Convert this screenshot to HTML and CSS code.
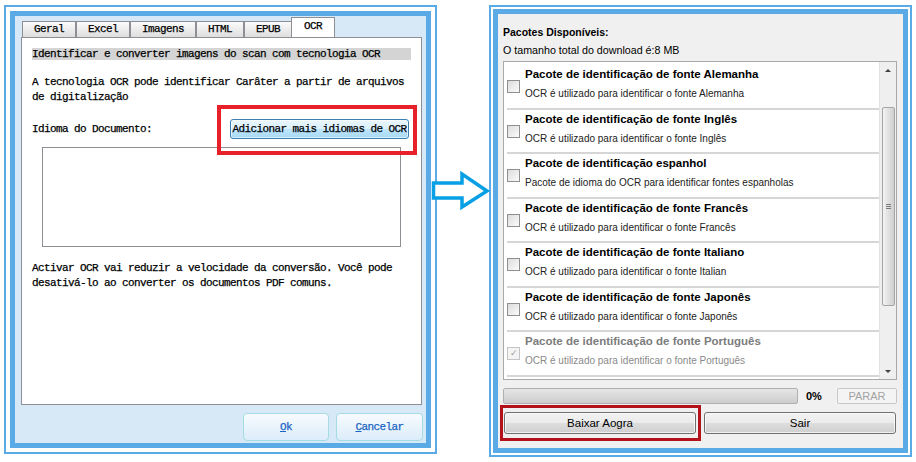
FILE: index.html
```html
<!DOCTYPE html>
<html>
	<head>
		<title>OCR</title>
		<link rel="stylesheet" href="styles.css">
	</head>
	<body>
		<div class="page">
			<!-- janela de configuração -->
			<div class="frame frame-left">
				<div class="dlg">
					<div class="tabs">
						<div class="tab">Geral</div>
						<div class="tab">Excel</div>
						<div class="tab">Imagens</div>
						<div class="tab">HTML</div>
						<div class="tab">EPUB</div>
						<div class="tab active">OCR</div>
					</div>
					<div class="pane">
						<div class="ocr-title">Identificar e converter imagens do scan com tecnologia OCR</div>
						<p class="intro">A tecnologia OCR pode identificar Carâter a partir de arquivos<br>de digitalização</p>
						<div class="lang-row">
							<span>Idioma do Documento:</span>
							<button class="btn-add">Adicionar mais idiomas de OCR</button>
						</div>
						<div class="lang-list"></div>
						<p class="note">Activar OCR vai reduzir a velocidade da conversão. Você pode<br>desativá-lo ao converter os documentos PDF comuns.</p>
						<div class="mark mark-add"></div>
					</div>
					<div class="footer">
						<button class="btn-dlg"><u>O</u>k</button>
						<button class="btn-dlg wide"><u>C</u>ancelar</button>
					</div>
				</div>
			</div>

			<svg class="arrow" width="62" height="42" viewBox="0 0 62 42">
				<polygon points="3.5,13 32,13 32,4 57,21 32,37 32,28 3.5,28" fill="#fff" stroke="#08a0e4" stroke-width="3.5" stroke-linejoin="miter"/>
			</svg>

			<!-- janela de download -->
			<div class="frame frame-right">
				<div class="dl">
					<div class="pkg-head">Pacotes Disponíveis:</div>
					<div class="pkg-size">O tamanho total do download é:8 MB</div>
					<div class="pkg-list">
						<div class="pkg-items" id="items"></div>
						<div class="scroll">
							<div class="sb-btn"><span class="tri up"></span></div>
							<div class="sb-track">
								<div class="sb-thumb"><span class="grip"></span></div>
							</div>
							<div class="sb-btn"><span class="tri down"></span></div>
						</div>
					</div>
					<div class="progress-row">
						<div class="progress"></div>
						<span class="pct">0%</span>
						<button class="btn-stop" disabled>PARAR</button>
					</div>
					<div class="actions">
						<button class="btn-win">Baixar Aogra</button>
						<button class="btn-win">Sair</button>
					</div>
					<div class="mark mark-dl"></div>
				</div>
			</div>
		</div>

		<script>
			// lista de pacotes de idioma
			const packs = [
				{ title: "Pacote de identificação de fonte Alemanha", desc: "OCR é utilizado para identificar o fonte Alemanha" },
				{ title: "Pacote de identificação de fonte Inglês", desc: "OCR é utilizado para identificar o fonte Inglês" },
				{ title: "Pacote de identificação espanhol", desc: "Pacote de idioma do OCR para identificar fontes espanholas" },
				{ title: "Pacote de identificação de fonte Francês", desc: "OCR é utilizado para identificar o fonte Francês" },
				{ title: "Pacote de identificação de fonte Italiano", desc: "OCR é utilizado para identificar o fonte Italian" },
				{ title: "Pacote de identificação de fonte Japonês", desc: "OCR é utilizado para identificar o fonte Japonês" },
				{ title: "Pacote de identificação de fonte Português", desc: "OCR é utilizado para identificar o fonte Português", installed: true },
			];

			const items = document.getElementById("items");
			packs.forEach((p) => {
				items.innerHTML += `
					<div class="pkg${p.installed ? " done" : ""}">
						<span class="chk">${p.installed ? "&#10003;" : ""}</span>
						<div class="pkg-text">
							<div class="pkg-title">${p.title}</div>
							<div class="pkg-desc">${p.desc}</div>
						</div>
					</div>
				`;
			});
		</script>
	</body>
</html>
```

FILE: styles.css
```css
body {
	margin: 0;
	background: #fff;
	font-family: "Liberation Sans", Arial, sans-serif;
}
.page {
	position: relative;
	display: flex;
	padding: 5px 0 0 4px;
}
.frame {
	box-sizing: border-box;
	border: 2px solid #5aaae6;
	background: #fff;
}
.frame-left {
	width: 433px;
	height: 449px;
	padding: 4px;
}
.frame-right {
	width: 423px;
	height: 452px;
	padding: 2px;
	margin-left: 52px;
}

/* janela esquerda */
.dlg {
	box-sizing: border-box;
	height: 100%;
	border: 5px solid #5aaae6;
	background: #d7e9f7;
	padding: 1px 3px 0 6px;
	font-family: "Liberation Mono", monospace;
	font-size: 11px;
	letter-spacing: -0.6px;
	color: #000;
	-webkit-text-stroke: 0.25px #000;
}
.tabs {
	display: flex;
	align-items: flex-end;
	height: 20px;
	margin-left: 1px;
}
.tab {
	box-sizing: border-box;
	height: 16px;
	line-height: 15px;
	padding: 0 11px;
	border: 1px solid #8d8f94;
	border-bottom: none;
	background: linear-gradient(#fbfbfb, #dedede);
}
.tab.active {
	position: relative;
	z-index: 1;
	height: 20px;
	line-height: 17px;
	padding: 0 12px;
	margin-left: -1px;
	background: #fff;
}
.pane {
	position: relative;
	box-sizing: border-box;
	height: 368px;
	margin-right: 1px;
	border: 1px solid #8d8f94;
	background: #fff;
	padding: 10px;
}
.ocr-title {
	height: 12px;
	line-height: 12px;
	background: #d4d4d4;
}
.intro,
.note {
	margin: 15px 0 0;
	line-height: 15px;
}
.note {
	margin-top: 14px;
}
.lang-row {
	display: flex;
	align-items: center;
	justify-content: space-between;
	margin-top: 14px;
	padding-right: 2px;
	height: 20px;
}
.btn-add {
	width: 179px;
	height: 20px;
	padding: 0;
	font: inherit;
	letter-spacing: inherit;
	color: #000;
	border: 1px solid #3c7fb1;
	border-radius: 3px;
	background: linear-gradient(#eaf6fd 0%, #d9f0fc 50%, #bee6fd 51%, #a7d9f5 100%);
	box-shadow: inset 0 0 0 1px rgba(255, 255, 255, 0.6);
}
.lang-list {
	box-sizing: border-box;
	width: 359px;
	height: 100px;
	margin: 8px 0 0 10px;
	border: 1px solid #8d8f94;
}
.footer {
	display: flex;
	justify-content: flex-end;
	gap: 7px;
	margin-top: 8px;
}
.btn-dlg {
	width: 86px;
	height: 28px;
	padding: 0;
	font: inherit;
	letter-spacing: inherit;
	color: #1a64c4;
	-webkit-text-stroke: 0.25px #1a64c4;
	border: 1px solid #a3dde3;
	border-radius: 4px;
	background: linear-gradient(#f7fbfe, #dcedfa);
}
.btn-dlg.wide {
	width: 87px;
}
.mark {
	position: absolute;
	box-sizing: border-box;
}
.mark-add {
	left: 195px;
	top: 67px;
	width: 200px;
	height: 50px;
	border: 4px solid #e8202a;
}
.arrow {
	position: absolute;
	left: 430px;
	top: 170px;
}

/* janela direita */
.dl {
	position: relative;
	box-sizing: border-box;
	height: 100%;
	border: 5px solid #5aaae6;
	background: #f0f0f0;
	padding: 10px 6px 0 5px;
	color: #000;
}
.pkg-head {
	font-size: 10.5px;
	font-weight: bold;
	line-height: 16px;
}
.pkg-size {
	font-size: 10.7px;
	line-height: 16px;
	margin-top: 2px;
}
.pkg-list {
	box-sizing: border-box;
	display: flex;
	height: 319px;
	margin-top: 3px;
	border: 1px solid #a9a9a9;
	background: #fff;
}
.pkg-items {
	flex: 1;
	padding-top: 3px;
	overflow: hidden;
}
.pkg {
	box-sizing: border-box;
	display: flex;
	align-items: center;
	gap: 5px;
	height: 44.5px;
	margin-left: 3px;
	border-bottom: 2px solid #d6d6d6;
}
.chk {
	box-sizing: border-box;
	width: 13px;
	height: 13px;
	margin-top: 1px;
	border: 1px solid #8e8f8f;
	background: linear-gradient(135deg, #dcdcdc, #fbfbfb);
	font-size: 9px;
	line-height: 11px;
	text-align: center;
	color: #a0a0a0;
}
.pkg-text {
	align-self: flex-start;
	padding-top: 1px;
}
.pkg-title {
	font-size: 11.5px;
	font-weight: bold;
	line-height: 16px;
}
.pkg-desc {
	font-size: 10px;
	line-height: 15px;
	margin-top: 4px;
	color: #222;
}
.pkg.done .pkg-title {
	color: #7c7c7c;
}
.pkg.done .pkg-desc {
	color: #8a8a8a;
}
.pkg.done .chk {
	border-color: #c4c4c4;
	background: #f4f4f4;
}
.scroll {
	display: flex;
	flex-direction: column;
	width: 16px;
	background: #efefef;
	border-left: 1px solid #e2e2e2;
}
.sb-btn {
	display: flex;
	align-items: center;
	justify-content: center;
	height: 16px;
}
.tri {
	width: 0;
	height: 0;
	border-left: 3px solid transparent;
	border-right: 3px solid transparent;
}
.tri.up {
	border-bottom: 3px solid #404040;
}
.tri.down {
	border-top: 3px solid #404040;
}
.sb-track {
	flex: 1;
}
.sb-thumb {
	box-sizing: border-box;
	display: flex;
	align-items: center;
	justify-content: center;
	height: 199px;
	margin: 29px 1px 0 2px;
	border: 1px solid #a5a5a5;
	border-radius: 2px;
	background: linear-gradient(90deg, #f3f3f3, #dedede 55%, #cfcfcf);
}
.grip {
	width: 5px;
	height: 5px;
	background: repeating-linear-gradient(#7a7a7a 0 1px, transparent 1px 2px);
}
.progress-row {
	display: flex;
	align-items: center;
	height: 16px;
	margin-top: 8px;
}
.progress {
	box-sizing: border-box;
	width: 295px;
	height: 16px;
	border: 1px solid #b0b0b0;
	border-radius: 2px;
	background: linear-gradient(#e6e6e6, #cdcdcd);
}
.pct {
	margin-left: 8px;
	font-size: 11px;
	font-weight: bold;
}
.btn-stop {
	box-sizing: border-box;
	width: 60px;
	height: 16px;
	margin-left: auto;
	padding: 0;
	font: 11px "Liberation Sans", Arial, sans-serif;
	color: #a3a3a3;
	border: 1px solid #c8c8c8;
	border-radius: 2px;
	background: #f4f4f4;
}
.actions {
	display: flex;
	gap: 8px;
	margin: 8px 1px 0;
}
.btn-win {
	flex: 1;
	height: 22px;
	padding: 0;
	font: 11.5px "Liberation Sans", Arial, sans-serif;
	color: #000;
	border: 1px solid #707070;
	border-radius: 3px;
	background: linear-gradient(#f2f2f2 0%, #ebebeb 50%, #dddddd 51%, #cfcfcf 100%);
	box-shadow: inset 0 0 0 1px rgba(255, 255, 255, 0.7);
}
.mark-dl {
	left: 2px;
	top: 391px;
	width: 201px;
	height: 36px;
	border: 3px solid #b3121b;
}
```
